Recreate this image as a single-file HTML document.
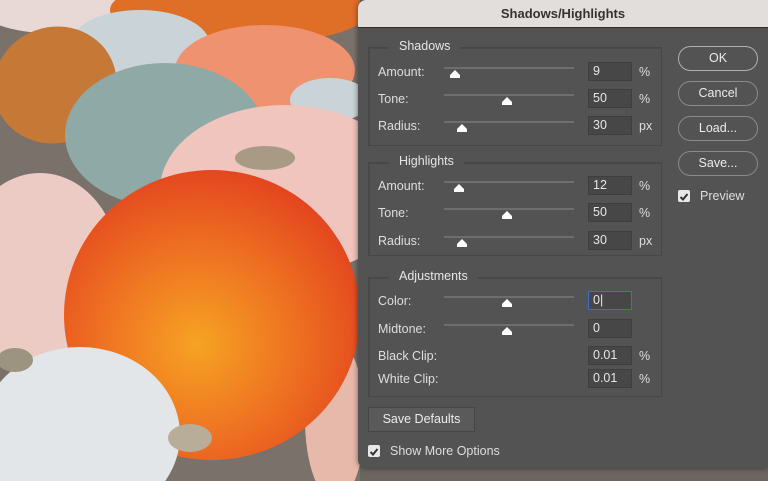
<!DOCTYPE html>
<html><head><meta charset="utf-8"><style>
*{margin:0;padding:0;box-sizing:border-box}
html,body{width:768px;height:481px;overflow:hidden}
body{position:relative;font-family:"Liberation Sans",sans-serif;background:#6d6560}
.dlg{position:absolute;left:358px;top:0;width:410px;height:468px;background:#535353;border-radius:8px 0 0 8px;overflow:hidden;box-shadow:0 0 6px rgba(0,0,0,.5)}
.tb{height:28px;background:#e2dedb;border-bottom:1px solid #2f2f2f;text-align:center;font-weight:bold;font-size:13px;color:#333;line-height:28px}
.fs{position:absolute;left:10px;width:294px;border:1px solid #474747;box-shadow:inset 1px 1px 0 #4a4a4a}
.lg{position:absolute;left:20px;top:-9px;background:#535353;padding:0 10px;color:#e6e6e6;font-size:12.5px}
.t{position:absolute;color:#dedede;font-size:12.5px}
.trk{position:absolute;left:75px;width:130px;height:2px;background:#6e6e6e}
.th{position:absolute;width:12px;height:10px}
.in{position:absolute;left:219px;width:44px;height:19px;background:#474747;border:1px solid #3e3e3e;color:#e6e6e6;font-size:12.5px;line-height:17px;padding-left:4px}
.btn{position:absolute;left:320px;width:80px;height:25px;border:1.5px solid #8a8a8a;border-radius:13px;color:#ececec;font-size:12.5px;text-align:center;line-height:22px}
.cb{position:absolute;width:12px;height:12px;background:#e8e8e8;border-radius:2px}
</style></head><body>
<svg width="360" height="481" style="position:absolute;left:0;top:0">
<defs><radialGradient id="o" cx="0.45" cy="0.6" r="0.6"><stop offset="0" stop-color="#f6a323"/><stop offset="0.45" stop-color="#f07a22"/><stop offset="1" stop-color="#e4471f"/></radialGradient></defs>
<rect width="360" height="481" fill="#7a716b"/>
<ellipse cx="50" cy="8" rx="70" ry="25" fill="#e9d9d6"/>
<ellipse cx="240" cy="10" rx="130" ry="35" fill="#df6e27"/>
<ellipse cx="140" cy="45" rx="70" ry="35" fill="#cad4d8"/>
<ellipse cx="55" cy="85" rx="62" ry="58" fill="#c67937" transform="rotate(-20 55 85)"/>
<ellipse cx="265" cy="70" rx="90" ry="45" fill="#ee9270"/>
<ellipse cx="330" cy="100" rx="40" ry="22" fill="#c9d3d8"/>
<ellipse cx="165" cy="135" rx="100" ry="72" fill="#8ea9a6"/>
<ellipse cx="285" cy="190" rx="125" ry="85" fill="#efc5bd"/>
<ellipse cx="40" cy="270" rx="80" ry="97" fill="#eccbc5"/>
<ellipse cx="335" cy="420" rx="30" ry="80" fill="#e7b9ab"/>
<ellipse cx="212" cy="315" rx="148" ry="145" fill="url(#o)"/>
<ellipse cx="265" cy="158" rx="30" ry="12" fill="#a89a85"/>
<ellipse cx="80" cy="435" rx="100" ry="88" fill="#e3e6e8"/>
<ellipse cx="15" cy="360" rx="18" ry="12" fill="#9c9380"/>
<ellipse cx="190" cy="438" rx="22" ry="14" fill="#b8ad98"/>
</svg>
<div class="dlg">
<div class="tb">Shadows/Highlights</div>
<div class="fs" style="top:47px;height:99px"><div class="lg">Shadows</div>
<div class="t" style="left:9px;top:17px">Amount:</div><div class="trk" style="top:19px"></div><svg class="th" style="left:80px;top:21px"><path d="M1 9 L1 6 L6 1 L11 6 L11 9Z" fill="#fff"/></svg><div class="in" style="top:14px">9</div><div class="t" style="left:270px;top:17px">%</div>
<div class="t" style="left:9px;top:44px">Tone:</div><div class="trk" style="top:46px"></div><svg class="th" style="left:132px;top:48px"><path d="M1 9 L1 6 L6 1 L11 6 L11 9Z" fill="#fff"/></svg><div class="in" style="top:41px">50</div><div class="t" style="left:270px;top:44px">%</div>
<div class="t" style="left:9px;top:71px">Radius:</div><div class="trk" style="top:73px"></div><svg class="th" style="left:87px;top:75px"><path d="M1 9 L1 6 L6 1 L11 6 L11 9Z" fill="#fff"/></svg><div class="in" style="top:68px">30</div><div class="t" style="left:270px;top:71px">px</div>
</div>
<div class="fs" style="top:162px;height:94px"><div class="lg">Highlights</div>
<div class="t" style="left:9px;top:16px">Amount:</div><div class="trk" style="top:18px"></div><svg class="th" style="left:84px;top:20px"><path d="M1 9 L1 6 L6 1 L11 6 L11 9Z" fill="#fff"/></svg><div class="in" style="top:13px">12</div><div class="t" style="left:270px;top:16px">%</div>
<div class="t" style="left:9px;top:43px">Tone:</div><div class="trk" style="top:45px"></div><svg class="th" style="left:132px;top:47px"><path d="M1 9 L1 6 L6 1 L11 6 L11 9Z" fill="#fff"/></svg><div class="in" style="top:40px">50</div><div class="t" style="left:270px;top:43px">%</div>
<div class="t" style="left:9px;top:71px">Radius:</div><div class="trk" style="top:73px"></div><svg class="th" style="left:87px;top:75px"><path d="M1 9 L1 6 L6 1 L11 6 L11 9Z" fill="#fff"/></svg><div class="in" style="top:68px">30</div><div class="t" style="left:270px;top:71px">px</div>
</div>
<div class="fs" style="top:277px;height:120px"><div class="lg">Adjustments</div>
<div class="t" style="left:9px;top:16px">Color:</div><div class="trk" style="top:18px"></div><svg class="th" style="left:132px;top:20px"><path d="M1 9 L1 6 L6 1 L11 6 L11 9Z" fill="#fff"/></svg><div class="in" style="top:13px;border:1.5px solid #3f6fbf">0|</div>
<div class="t" style="left:9px;top:44px">Midtone:</div><div class="trk" style="top:46px"></div><svg class="th" style="left:132px;top:48px"><path d="M1 9 L1 6 L6 1 L11 6 L11 9Z" fill="#fff"/></svg><div class="in" style="top:41px">0</div>
<div class="t" style="left:9px;top:71px">Black Clip:</div><div class="in" style="top:68px">0.01</div><div class="t" style="left:270px;top:71px">%</div>
<div class="t" style="left:9px;top:94px">White Clip:</div><div class="in" style="top:91px">0.01</div><div class="t" style="left:270px;top:94px">%</div>
</div>
<div style="position:absolute;left:10px;top:407px;width:107px;height:25px;background:#5a5a5a;border:1px solid #464646;color:#ececec;font-size:12.5px;text-align:center;line-height:23px">Save Defaults</div>
<div class="cb" style="left:10px;top:445px"><svg width="12" height="12"><path d="M2.5 6 L5 8.5 L9.5 3" stroke="#333" stroke-width="2" fill="none"/></svg></div>
<div class="t" style="left:32px;top:444px">Show More Options</div>
<div class="btn" style="top:46px;border-color:#b0b0b0">OK</div>
<div class="btn" style="top:81px">Cancel</div>
<div class="btn" style="top:116px">Load...</div>
<div class="btn" style="top:151px">Save...</div>
<div class="cb" style="left:320px;top:190px"><svg width="12" height="12"><path d="M2.5 6 L5 8.5 L9.5 3" stroke="#333" stroke-width="2" fill="none"/></svg></div>
<div class="t" style="left:342px;top:189px">Preview</div>
</div>
</body></html>
